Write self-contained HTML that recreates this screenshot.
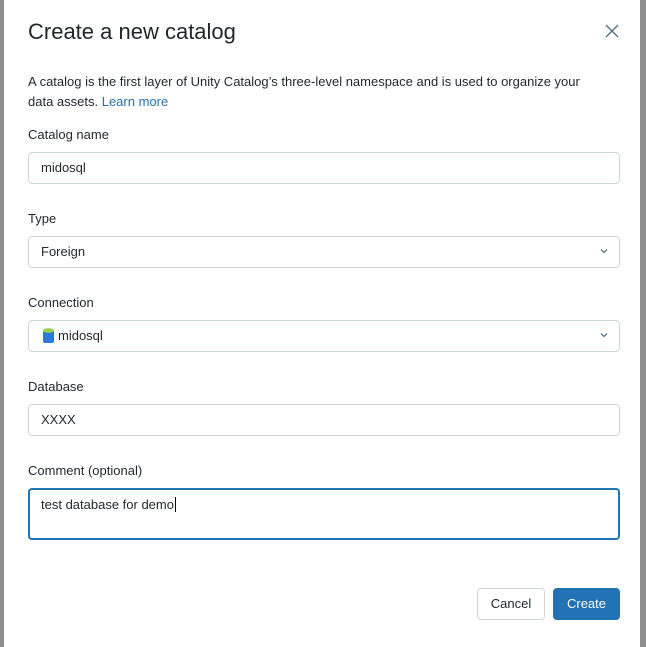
<!DOCTYPE html>
<html><head><style>
*{box-sizing:border-box;margin:0;padding:0}
body{width:646px;height:647px;background:#8e8e8e;font-family:"Liberation Sans",sans-serif;position:relative;overflow:hidden;color:#1f272d}
.m{position:absolute;left:4px;top:0;width:636px;height:647px;background:#fff}
.a{position:absolute}
h1{position:absolute;left:24px;top:19px;font-size:22px;font-weight:normal;color:#1f272d}
.p{left:24px;top:72px;font-size:13px;line-height:20px;color:#1f272d;width:566px}
.lbl{left:24px;font-size:13px}
.in{left:24px;width:592px;height:32px;border:1px solid #cbd5e0;border-radius:4px;font-size:13px;padding-left:12px;line-height:30px}
.chev{position:absolute;right:10px;top:9px}
.btn{height:32px;border-radius:4px;font-size:13px;line-height:30px;text-align:center;top:588px}
</style></head><body>
<div class="m">
<h1>Create a new catalog</h1>
<svg class="a" style="left:601px;top:24px" width="14" height="14" viewBox="0 0 14 14"><path d="M1 1L13 13M13 1L1 13" stroke="#5f7281" stroke-width="1.5"/></svg>
<div class="a p">A catalog is the first layer of Unity Catalog’s three-level namespace and is used to organize your data assets. <span style="color:#2272b4">Learn more</span></div>
<div class="a lbl" style="top:127px">Catalog name</div>
<div class="a in" style="top:152px">midosql</div>
<div class="a lbl" style="top:211px">Type</div>
<div class="a in" style="top:236px">Foreign<svg class="chev" width="10" height="10" viewBox="0 0 10 10"><path d="M2 3.5L5 6.5L8 3.5" stroke="#5f7281" stroke-width="1.3" fill="none"/></svg></div>
<div class="a lbl" style="top:295px">Connection</div>
<div class="a in" style="top:320px;padding-left:14px"><svg style="vertical-align:-3px;margin-right:4px" width="11" height="15" viewBox="0 0 11 15"><rect x="0" y="2" width="11" height="13" rx="2" fill="#2b7bd6"/><ellipse cx="5.5" cy="2.5" rx="5.5" ry="2.3" fill="#9bd14a"/></svg>midosql<svg class="chev" width="10" height="10" viewBox="0 0 10 10"><path d="M2 3.5L5 6.5L8 3.5" stroke="#5f7281" stroke-width="1.3" fill="none"/></svg></div>
<div class="a lbl" style="top:379px">Database</div>
<div class="a in" style="top:404px">XXXX</div>
<div class="a lbl" style="top:463px">Comment (optional)</div>
<div class="a in" style="top:488px;height:52px;border:2px solid #2272b4;padding-left:11px;line-height:30px">test database for demo<span style="border-left:1px solid #000;margin-left:1px"></span></div>
<div class="a btn" style="left:473px;width:68px;border:1px solid #cbd5e0">Cancel</div>
<div class="a btn" style="left:549px;width:67px;background:#2272b4;color:#fff;border:1px solid #2272b4">Create</div>
</div>
</body></html>
